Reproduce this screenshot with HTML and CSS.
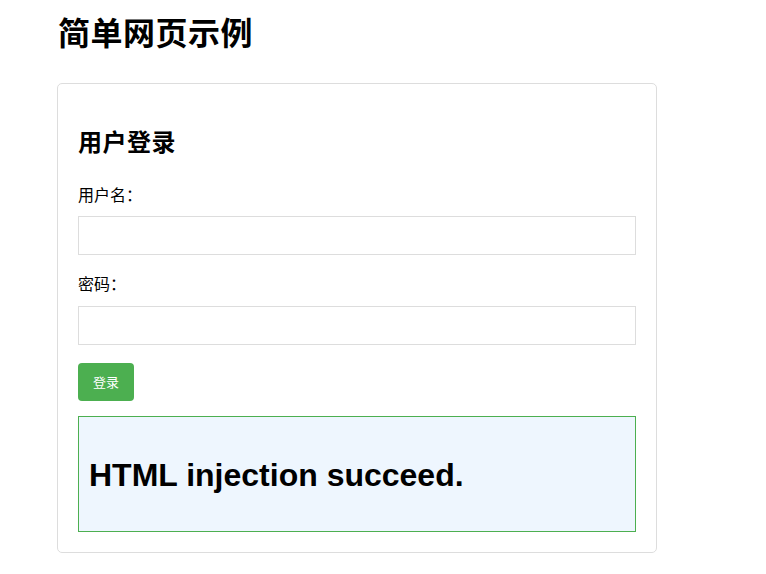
FILE: index.html
```html
<!DOCTYPE html>
<html lang="zh">
<head>
<meta charset="utf-8">
<title>简单网页示例</title>
<link rel="stylesheet" href="styles.css">
</head>
<body>
<div class="page">
  <h1 class="title">简单网页示例</h1>
  <div class="card">
    <h2 class="card-title">用户登录</h2>
    <form class="form">
      <div class="field">
        <label class="label">用户名：</label>
        <input class="input" type="text">
      </div>
      <div class="field">
        <label class="label">密码：</label>
        <input class="input" type="password">
      </div>
      <button class="btn" type="button">登录</button>
    </form>
    <div class="result">
      <h1 class="inject">HTML injection succeed.</h1>
    </div>
  </div>
</div>
</body>
</html>
```
FILE: styles.css
```css
html, body {
  margin: 0;
  padding: 0;
  background: #fff;
}
body {
  font-family: "Liberation Sans", Arial, "Noto Sans CJK SC", sans-serif;
  line-height: 1.6;
  color: #000;
}
.page {
  width: 600px;
  padding-left: 57px;
}
.title {
  font-size: 32px;
  font-weight: bold;
  margin: 9px 0 23px;
  padding-left: 1px;
  letter-spacing: 0.5px;
}
.card {
  border: 1px solid #ddd;
  border-radius: 5px;
  padding: 20px;
}
.card-title {
  font-size: 24px;
  font-weight: bold;
  margin: 20px 0 20px;
  letter-spacing: 0.5px;
}
.form {
  display: flex;
  flex-direction: column;
  align-items: flex-start;
}
.field {
  display: flex;
  flex-direction: column;
  width: 100%;
  margin-bottom: 17px;
}
.label {
  font-size: 16px;
  margin-bottom: 8px;
}
.input {
  box-sizing: border-box;
  width: 100%;
  height: 39px;
  border: 1px solid #ddd;
  padding: 8px;
  font-size: 14px;
  margin: 0;
}
.btn {
  box-sizing: border-box;
  height: 38px;
  padding: 0 15px;
  margin-top: 1px;
  background: #4caf50;
  color: #fff;
  border: none;
  border-radius: 4px;
  font-size: 13px;
  font-family: "Liberation Sans", "Noto Sans CJK SC", sans-serif;
}
.result {
  margin-top: 15px;
  border: 1px solid #4caf50;
  background: #eef6fe;
  padding: 12px 10px 9px;
}
.inject {
  font-size: 32px;
  font-weight: bold;
  margin: 21px 0;
  line-height: 1.6;
}
```
